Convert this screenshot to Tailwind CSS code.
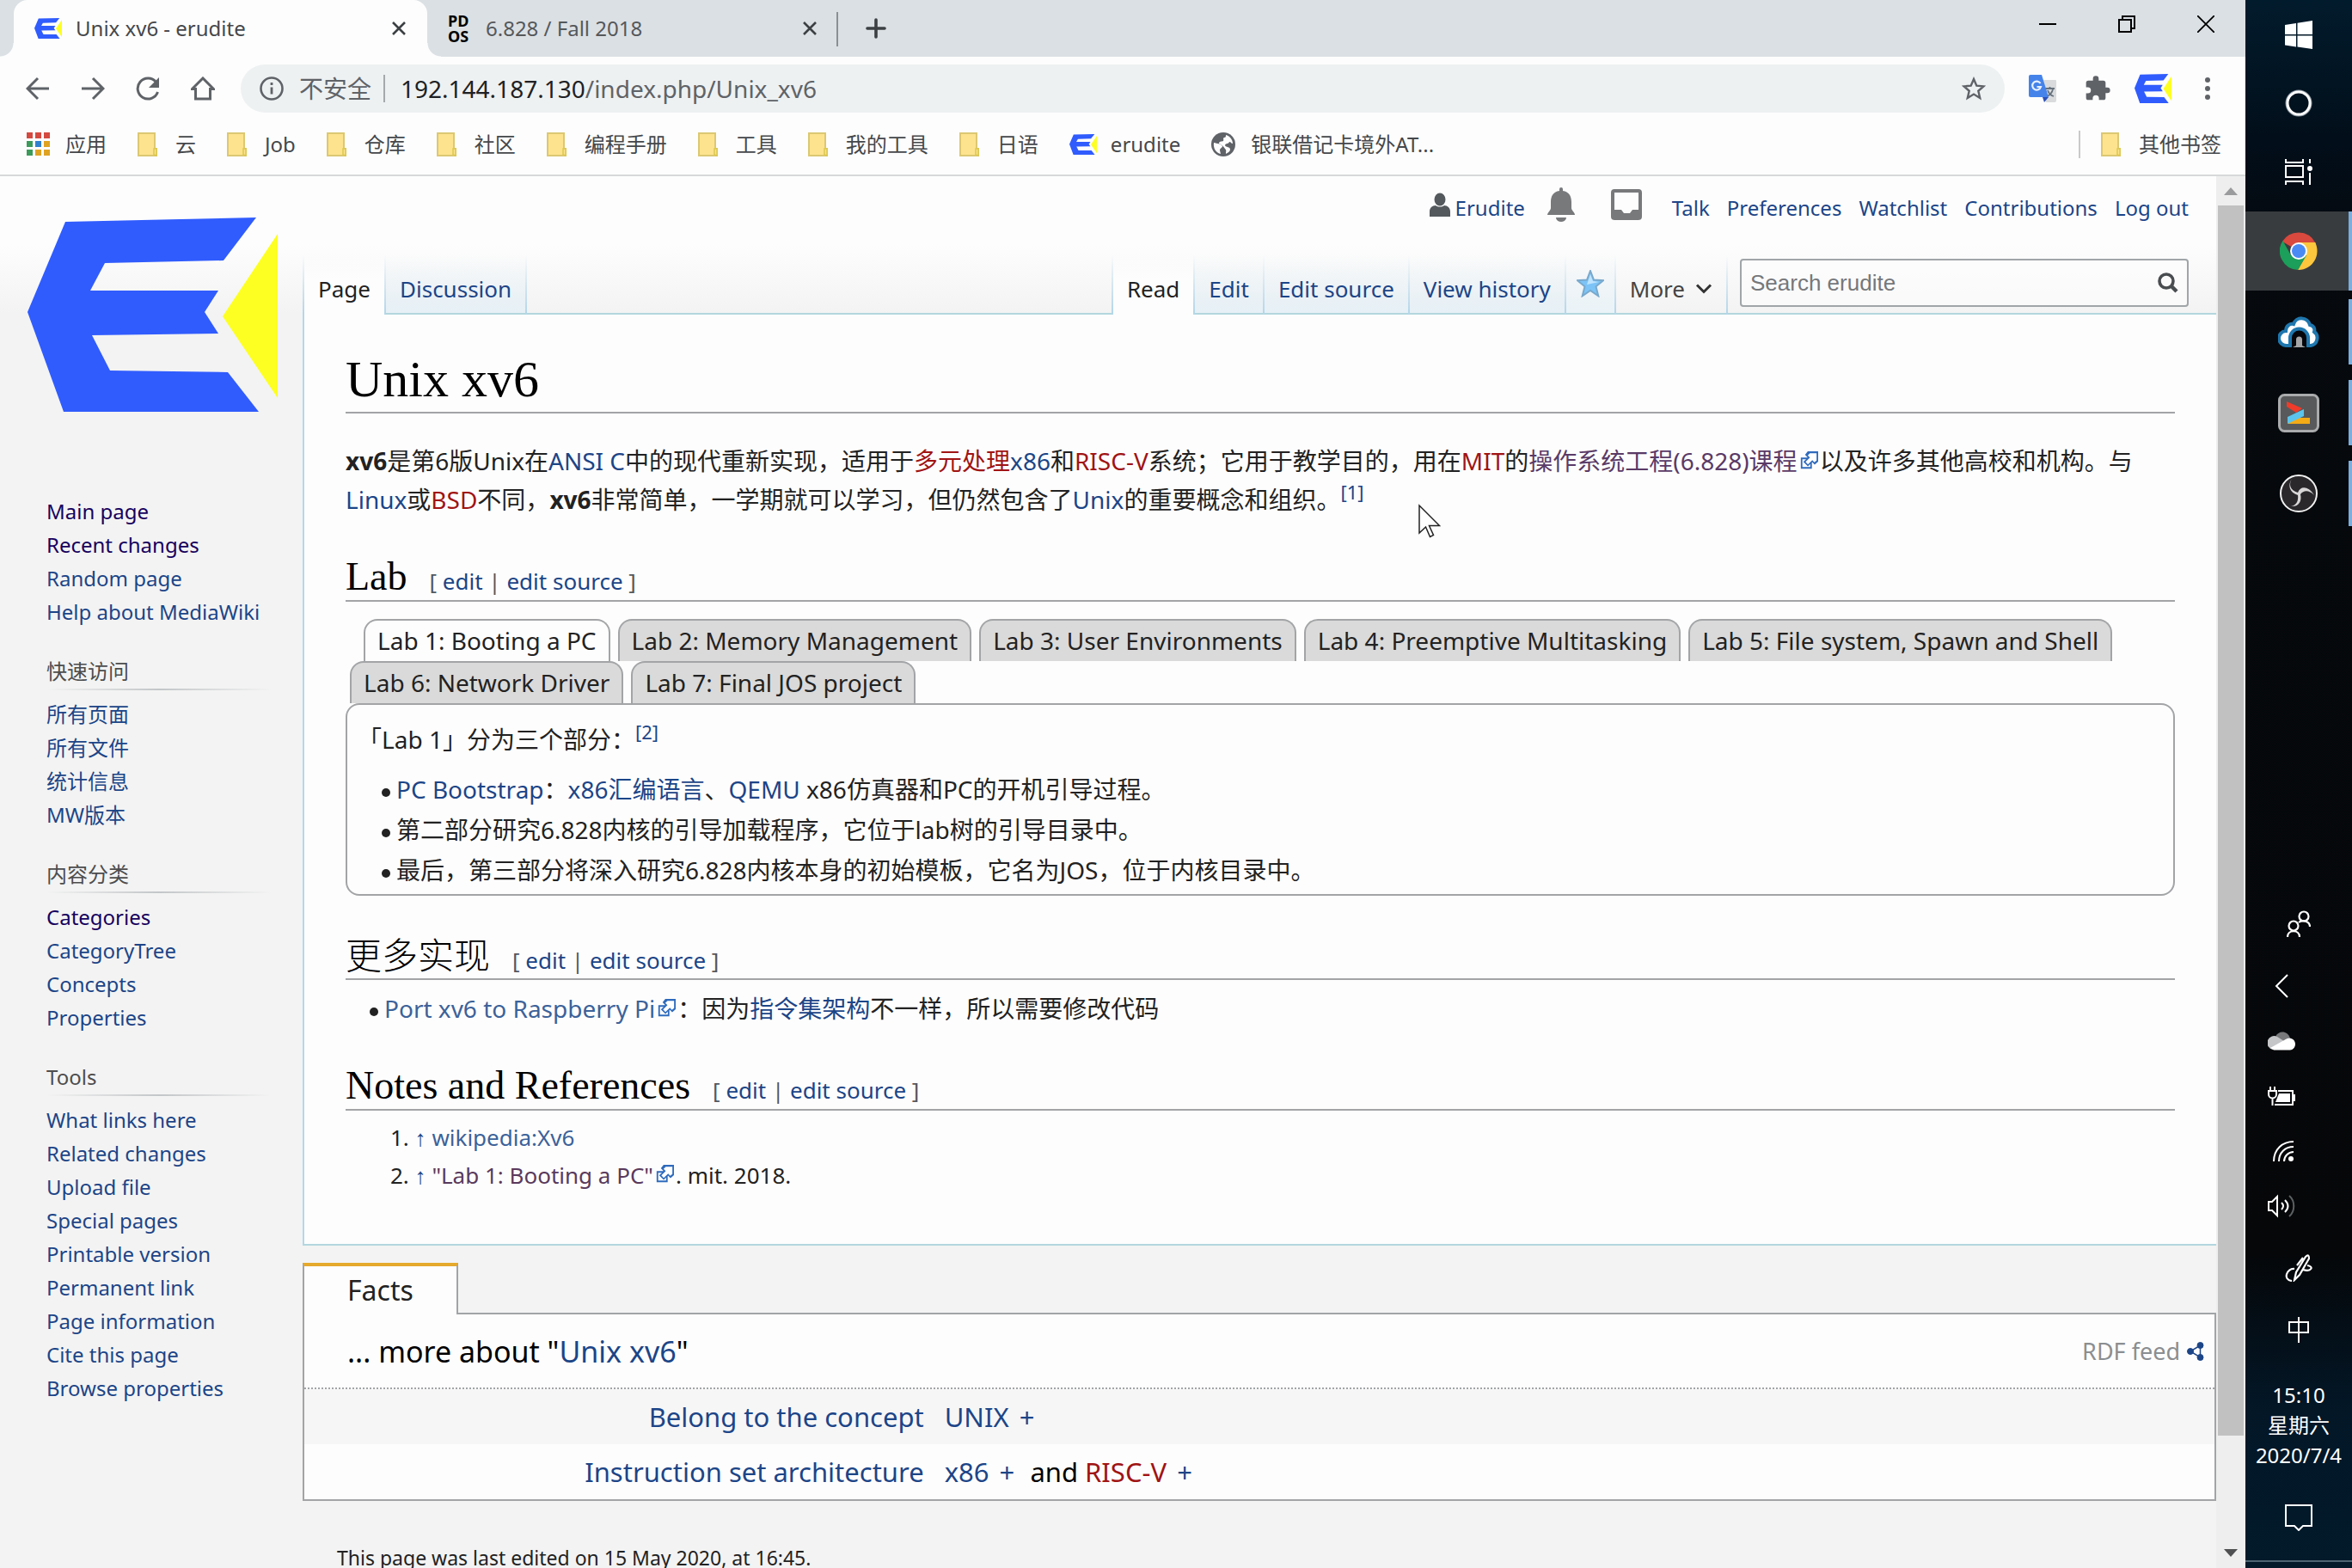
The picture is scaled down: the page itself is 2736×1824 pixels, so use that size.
<!DOCTYPE html>
<html lang="zh-CN">
<head>
  <meta charset="UTF-8" />
  <meta name="viewport" content="width=device-width, initial-scale=1.0" />
  <title>Unix xv6 - erudite</title>
  <script src="https://cdn.jsdelivr.net/npm/@tailwindcss/browser@4"></script>
</head>

<body class="h-screen overflow-hidden flex font-['Noto_Sans','Noto_Sans_CJK_SC',sans-serif] text-[#222]">

  <!-- shared icons -->
  <svg class="hidden">
    <symbol id="logo" viewBox="0 0 291 226" preserveAspectRatio="none">
      <path fill="#305cfd" d="M44 5 266 0 228 50 90 53 73 85 222 85 206 110 222 135 75 137 96 178 233 180 269 226 42 226 0 110Z" />
      <path fill="#fdff22" d="M291 19V210L227 115Z" />
    </symbol>
    <symbol id="folder" viewBox="0 0 24 28">
      <path d="M1 1h19v18h2v8H1z" fill="#fde38d" stroke="#dcc873" stroke-width="2" />
      <path d="M19 26v-7h3v8z" fill="#fde38d" stroke="#dcc84f" stroke-width="1.5" />
    </symbol>
    <symbol id="close" viewBox="0 0 18 18">
      <path d="M2 2l14 14M16 2 2 16" stroke="#3c4043" stroke-width="2.6" />
    </symbol>
    <symbol id="ext" viewBox="0 0 12 12">
      <path fill="#fff" stroke="#2f6bbd" d="M1.5 4.5h6v6h-6z" />
      <path fill="#2f6bbd" d="M5.4 0h6.6v6.6L9.8 8.4 8.2 6.8 5.5 9.6 2.6 6.7l2.8-2.8L3.7 2.2z" />
      <path fill="#fff" d="M6.8 1.2H11v4.6L9.6 7 8.3 5.6 5.5 8.3 4 6.7l2.8-2.8-1.4-1.3z" />
    </symbol>
  </svg>

  <!-- browser window -->
  <div class="flex-1 min-w-0 flex flex-col bg-[#fdfdfd]">

    <header>
      <div class="h-[66px] bg-[#dbe0e4] flex items-start pl-4">
        <div class="relative w-[481px] h-full bg-[#fdfdfd] rounded-t-2xl flex items-center pl-6 pr-6">
          <span class="absolute -left-4 bottom-0 size-4 bg-[radial-gradient(circle_at_0_0,#dbe0e4_15px,#fdfdfd_16px)]"></span>
          <span class="absolute -right-4 bottom-0 size-4 bg-[radial-gradient(circle_at_100%_0,#dbe0e4_15px,#fdfdfd_16px)]"></span>
          <svg class="w-8 h-6"><use href="#logo" /></svg>
          <span class="ml-4 flex-1 text-2xl text-[#45484b]">Unix xv6 - erudite</span>
          <button aria-label="Close tab"><svg class="size-[18px]"><use href="#close" /></svg></button>
        </div>
        <div class="w-[476px] h-full flex items-center pl-6 pr-[22px]">
          <span class="w-7 text-lg leading-[18px] font-bold text-black">PD<br>OS</span>
          <span class="ml-4 flex-1 text-2xl text-[#55585b]">6.828 / Fall 2018</span>
          <button aria-label="Close tab"><svg class="size-[18px]"><use href="#close" /></svg></button>
        </div>
        <div class="w-0.5 h-10 mt-[14px] bg-[#8b8f93]"></div>
        <button class="ml-8 h-full" aria-label="New tab">
          <svg class="size-6" viewBox="0 0 24 24" stroke="#3c4043" stroke-width="3.6" stroke-linecap="round"><path d="M12 2v20M2 12h20" /></svg>
        </button>
        <div class="ml-auto flex">
          <button class="w-[92px] h-14 grid place-items-center" aria-label="Minimize">
            <svg class="size-5" viewBox="0 0 20 20"><path d="M0 10h20" stroke="#000" stroke-width="2" /></svg>
          </button>
          <button class="w-[92px] h-14 grid place-items-center" aria-label="Restore">
            <svg class="size-5" viewBox="0 0 20 20" fill="none" stroke="#000" stroke-width="2"><path d="M1 5h14v14H1zM5 5V1h14v14h-4" /></svg>
          </button>
          <button class="w-[92px] h-14 grid place-items-center" aria-label="Close">
            <svg class="size-5" viewBox="0 0 20 20"><path d="M0 0l20 20M20 0 0 20" stroke="#000" stroke-width="1.8" /></svg>
          </button>
        </div>
      </div>

      <div class="h-[74px] px-3 flex items-center text-[#5f6368]">
        <button class="w-16 grid place-items-center" aria-label="Back">
          <svg class="size-7" viewBox="0 0 28 28" fill="none" stroke="currentColor" stroke-width="3"><path d="M27 14H3M14 2 2 14l12 12" /></svg>
        </button>
        <button class="w-16 grid place-items-center" aria-label="Forward">
          <svg class="size-7" viewBox="0 0 28 28" fill="none" stroke="currentColor" stroke-width="3"><path d="M1 14h24M14 2l12 12-12 12" /></svg>
        </button>
        <button class="w-16 grid place-items-center" aria-label="Reload">
          <svg class="size-7" viewBox="0 0 28 28"><path d="M23.500 6.500A12 12 0 1 0 25.500 18" fill="none" stroke="currentColor" stroke-width="3" /><path d="M27 1v12H15z" fill="currentColor" /></svg>
        </button>
        <button class="w-16 grid place-items-center" aria-label="Home">
          <svg class="size-7" viewBox="0 0 28 28" fill="none" stroke="currentColor" stroke-width="3"><path d="M1.500 14.500 14 2l12.500 12.500H22.500V26h-17V14.500z" /></svg>
        </button>
        <div class="flex-1 mx-3 h-14 rounded-full bg-[#eef1f2] flex items-center pl-[22px] pr-[22px] text-[28px]">
          <svg class="size-7" viewBox="0 0 28 28" fill="none" stroke="currentColor"><circle cx="14" cy="14" r="12.500" stroke-width="2.600" /><path d="M14 12.500v8M14 7v3" stroke-width="2.800" /></svg>
          <span class="ml-[18px]">不安全</span>
          <span class="mx-[14px] w-0.5 h-8 bg-[#a6a9ac]"></span>
          <div class="flex-1 ml-1"><span class="text-[#202124]">192.144.187.130</span><span>/index.php/Unix_xv6</span></div>
          <button aria-label="Bookmark this page">
            <svg class="block size-7" viewBox="0 0 28 28" fill="none" stroke="currentColor" stroke-width="2.400"><path d="M14 3l3.300 7.700 8.200.7-6.200 5.400 1.900 8.200-7.200-4.400L6.800 25l1.900-8.200-6.200-5.400 8.200-.7z" /></svg>
          </button>
        </div>
        <button class="w-16 grid place-items-center" aria-label="Translate">
          <svg class="size-8" viewBox="0 0 32 32"><path d="M12 6h19a1 1 0 0 1 1 1v23a2 2 0 0 1-2 2H20z" fill="#d9dbdd" /><path d="M19 16h11M24.500 14v3M28 17c-1 4-4 7-7 8M22 18c1 3 4 6 7 7" stroke="#66717c" stroke-width="1.800" fill="none" /><path d="M16 26h7l-5 6z" fill="#2b50b8" /><path d="M2 0h13l8 26H2a2 2 0 0 1-2-2V2a2 2 0 0 1 2-2z" fill="#4583ea" /><path d="M13.500 10A5 5 0 1 0 14 14H9.500" fill="none" stroke="#e9f0ff" stroke-width="2.200" /></svg>
        </button>
        <button class="w-16 grid place-items-center" aria-label="Extensions">
          <svg class="size-8" viewBox="0 0 24 24" fill="currentColor"><path d="M20.500 11H19V7a2 2 0 0 0-2-2h-4V3.500a2.500 2.500 0 0 0-5 0V5H4a2 2 0 0 0-2 2v3.800h1.500a2.700 2.700 0 0 1 0 5.400H2V20a2 2 0 0 0 2 2h3.800v-1.500a2.700 2.700 0 0 1 5.400 0V22H17a2 2 0 0 0 2-2v-4h1.500a2.500 2.500 0 0 0 0-5z" /></svg>
        </button>
        <button class="w-16 grid place-items-center" aria-label="Erudite"><svg class="w-[43px] h-[34px]"><use href="#logo" /></svg></button>
        <button class="w-16 grid place-items-center" aria-label="Menu">
          <svg class="w-2 h-7" viewBox="0 0 8 28" fill="currentColor"><circle cx="4" cy="4" r="3" /><circle cx="4" cy="14" r="3" /><circle cx="4" cy="24" r="3" /></svg>
        </button>
      </div>

      <nav class="h-[65px] pb-2 pl-[31px] pr-7 border-b-2 border-[#d7d8d9] flex items-center gap-9 text-2xl text-[#45484b]">
        <a href="#" class="flex items-center gap-[18px]">
          <svg class="size-[27px]" viewBox="0 0 27 27"><path fill="#d44a40" d="M0 0h7v7H0zM10 0h7v7h-7zM20 0h7v7h-7z" /><path fill="#3c9a5b" d="M0 10h7v7H0zM0 20h7v7H0z" /><path fill="#2f80cf" d="M10 10h7v7h-7z" /><path fill="#dfa322" d="M20 10h7v7h-7zM10 20h7v7h-7zM20 20h7v7h-7z" /></svg>应用
        </a>
        <a href="#" class="flex items-center gap-5"><svg class="w-6 h-7"><use href="#folder" /></svg>云</a>
        <a href="#" class="flex items-center gap-5"><svg class="w-6 h-7"><use href="#folder" /></svg>Job</a>
        <a href="#" class="flex items-center gap-5"><svg class="w-6 h-7"><use href="#folder" /></svg>仓库</a>
        <a href="#" class="flex items-center gap-5"><svg class="w-6 h-7"><use href="#folder" /></svg>社区</a>
        <a href="#" class="flex items-center gap-5"><svg class="w-6 h-7"><use href="#folder" /></svg>编程手册</a>
        <a href="#" class="flex items-center gap-5"><svg class="w-6 h-7"><use href="#folder" /></svg>工具</a>
        <a href="#" class="flex items-center gap-5"><svg class="w-6 h-7"><use href="#folder" /></svg>我的工具</a>
        <a href="#" class="flex items-center gap-5"><svg class="w-6 h-7"><use href="#folder" /></svg>日语</a>
        <a href="#" class="flex items-center gap-4"><svg class="w-8 h-6"><use href="#logo" /></svg>erudite</a>
        <a href="#" class="flex items-center gap-[18px]">
          <svg class="size-7" viewBox="0 0 28 28"><circle cx="14" cy="14" r="14" fill="#5f6368" /><path fill="#fdfdfd" d="M3 12c4 1 8 1 10 4 0 2-3 2-3 5l1 4C6 24 2 19 3 12zM17 3c4 1 8 5 8 10-2 0-2-2-4-2-1 3-4 1-5 4 1 3 6 1 6 5 0 2-3 4-5 5 0-3 1-4-1-6-2-3-4-5-7-6 0-3 3-2 5-3 1-2-1-3 1-4 2 0 2-1 2-3z" /></svg>银联借记卡境外AT...
        </a>
        <a href="#" class="ml-auto flex items-center gap-5 border-l-2 border-[#c8cacc] pl-6"><svg class="w-6 h-7"><use href="#folder" /></svg>其他书签</a>
      </nav>
    </header>

    <!-- wiki page -->
    <div class="relative flex-1 min-h-0 flex bg-[#f3f3f3] bg-[linear-gradient(#fdfdfd_50%,#f3f3f3)] bg-[length:100%_160px] bg-no-repeat">

      <aside class="w-[352px] shrink-0 overflow-hidden pt-12 text-2xl leading-[39px] text-[#1c4587]">
        <a href="#" class="block pl-8" aria-label="Main page"><svg class="block w-[291px] h-[226px]"><use href="#logo" /></svg></a>
        <ul class="mt-24 pl-[54px]">
          <li><a href="#" class="text-[#17025e]">Main page</a></li>
          <li><a href="#" class="text-[#17025e]">Recent changes</a></li>
          <li><a href="#">Random page</a></li>
          <li><a href="#">Help about MediaWiki</a></li>
        </ul>
        <h3 class="mt-[30px] pl-[54px] leading-10 text-[#4d4d4d]">快速访问</h3>
        <div class="ml-[54px] mr-9 h-0.5 bg-linear-to-r from-transparent via-[#c3c6c8] to-transparent"></div>
        <ul class="mt-2 pl-[54px]">
          <li><a href="#">所有页面</a></li>
          <li><a href="#">所有文件</a></li>
          <li><a href="#">统计信息</a></li>
          <li><a href="#">MW版本</a></li>
        </ul>
        <h3 class="mt-[30px] pl-[54px] leading-10 text-[#4d4d4d]">内容分类</h3>
        <div class="ml-[54px] mr-9 h-0.5 bg-linear-to-r from-transparent via-[#c3c6c8] to-transparent"></div>
        <ul class="mt-2 pl-[54px]">
          <li><a href="#" class="text-[#17025e]">Categories</a></li>
          <li><a href="#">CategoryTree</a></li>
          <li><a href="#">Concepts</a></li>
          <li><a href="#">Properties</a></li>
        </ul>
        <h3 class="mt-[30px] pl-[54px] leading-10 text-[#4d4d4d]">Tools</h3>
        <div class="ml-[54px] mr-9 h-0.5 bg-linear-to-r from-transparent via-[#c3c6c8] to-transparent"></div>
        <ul class="mt-2 pl-[54px]">
          <li><a href="#">What links here</a></li>
          <li><a href="#">Related changes</a></li>
          <li><a href="#">Upload file</a></li>
          <li><a href="#">Special pages</a></li>
          <li><a href="#">Printable version</a></li>
          <li><a href="#">Permanent link</a></li>
          <li><a href="#">Page information</a></li>
          <li><a href="#">Cite this page</a></li>
          <li><a href="#">Browse properties</a></li>
        </ul>
      </aside>

      <div class="flex-1 min-w-0 overflow-hidden">
        <nav class="h-[74px] pr-8 flex items-center justify-end gap-5 text-2xl text-[#1c4587]">
          <a href="#" class="flex items-center gap-1.5">
            <svg class="w-6 h-7 mb-2" viewBox="0 0 24 28" fill="#54595d"><ellipse cx="12" cy="8" rx="6.500" ry="7.500" /><path d="M0 28v-6c0-4 3-7 7-7 3 2 7 2 10 0 4 0 7 3 7 7v6z" /></svg>Erudite
          </a>
          <a href="#" class="ml-1.5 mb-2" aria-label="Alerts">
            <svg class="w-8 h-10" viewBox="0 0 32 40" fill="#77797b"><path d="M14 2a2 2 0 0 1 4 0v2c7 1 10 6 10 13v7c0 3 4 5 4 8H0c0-3 4-5 4-8v-7C4 10 7 5 14 4zM10 35h12c0 3-3 5-6 5s-6-2-6-5z" /></svg>
          </a>
          <a href="#" class="ml-[22px] mb-2 mr-[15px]" aria-label="Notices">
            <svg class="size-9" viewBox="0 0 36 36"><path fill="#77797b" fill-rule="evenodd" d="M4 0h28a4 4 0 0 1 4 4v28a4 4 0 0 1-4 4H4a4 4 0 0 1-4-4V4a4 4 0 0 1 4-4zm0 4v20h8l3 4h7l3-4h7V4z" /></svg>
          </a>
          <a href="#">Talk</a>
          <a href="#">Preferences</a>
          <a href="#">Watchlist</a>
          <a href="#">Contributions</a>
          <a href="#">Log out</a>
        </nav>

        <div class="mt-[17px] h-[70px] flex text-[26px] text-[#1c4587]">
          <div class="w-0.5 bg-linear-to-b from-transparent to-[#b3d6ea]"></div>
          <a href="#" class="px-4 pt-3 pb-0.5 flex items-center text-[#222] bg-linear-to-b from-transparent to-[#fdfdfd] to-40%">Page</a>
          <div class="w-0.5 bg-linear-to-b from-transparent to-[#b3d6ea]"></div>
          <a href="#" class="px-4 pt-3 flex items-center border-b-2 border-[#b3d6de] bg-linear-to-b from-transparent to-[#e6f0f6]">Discussion</a>
          <div class="w-0.5 bg-linear-to-b from-transparent to-[#b3d6ea]"></div>
          <div class="flex-1 border-b-2 border-[#b3d6de]"></div>
          <div class="w-0.5 bg-linear-to-b from-transparent to-[#b3d6ea]"></div>
          <a href="#" class="px-4 pt-3 pb-0.5 flex items-center text-[#222] bg-linear-to-b from-transparent to-[#fdfdfd] to-40%">Read</a>
          <div class="w-0.5 bg-linear-to-b from-transparent to-[#b3d6ea]"></div>
          <a href="#" class="px-4 pt-3 flex items-center border-b-2 border-[#b3d6de] bg-linear-to-b from-transparent to-[#e6f0f6]">Edit</a>
          <div class="w-0.5 bg-linear-to-b from-transparent to-[#b3d6ea]"></div>
          <a href="#" class="px-4 pt-3 flex items-center border-b-2 border-[#b3d6de] bg-linear-to-b from-transparent to-[#e6f0f6]">Edit source</a>
          <div class="w-0.5 bg-linear-to-b from-transparent to-[#b3d6ea]"></div>
          <a href="#" class="px-4 pt-3 flex items-center border-b-2 border-[#b3d6de] bg-linear-to-b from-transparent to-[#e6f0f6]">View history</a>
          <div class="w-0.5 bg-linear-to-b from-transparent to-[#b3d6ea]"></div>
          <a href="#" class="px-3 flex items-center border-b-2 border-[#b3d6de] bg-linear-to-b from-transparent to-[#eaf3f8]" aria-label="Unwatch">
            <svg class="size-8" viewBox="0 0 32 32"><path d="M16 1l4 10.500 11 .8-8.500 7 2.800 11L16 24l-9.300 6.300 2.800-11L1 12.300l11-.8z" fill="#7cc4f7" stroke="#79a9cc" stroke-width="2" /><path d="M16 5l3 8 7 1-14 3z" fill="#bfe4ff" /></svg>
          </a>
          <div class="w-0.5 bg-linear-to-b from-transparent to-[#b3d6ea]"></div>
          <button class="px-4 pt-3 flex items-center gap-3 border-b-2 border-[#b3d6de] text-[#444]">More
            <svg class="w-5 h-3" viewBox="0 0 20 12"><path d="M2 1.500l8 8 8-8" fill="none" stroke="#333" stroke-width="3" /></svg>
          </button>
          <div class="w-0.5 bg-linear-to-b from-transparent to-[#b3d6ea]"></div>
          <form class="pl-[14px] pr-8 pt-[5px] border-b-2 border-[#b3d6de]">
            <div class="w-[522px] h-14 flex items-center border-2 border-[#a0a5a8] rounded-sm px-2.5 bg-[#fdfdfd]/60">
              <input type="search" aria-label="Search erudite" placeholder="Search erudite" class="flex-1 min-w-0 outline-none font-['Liberation_Sans',sans-serif] placeholder:text-[#75787b]" />
              <button type="button" aria-label="Search">
                <svg class="block size-6" viewBox="0 0 24 24" fill="none" stroke="#4a4d50"><circle cx="10" cy="10" r="8" stroke-width="3.600" /><path d="M15.500 15.500 22 22" stroke-width="4.500" /></svg>
              </button>
            </div>
          </form>
        </div>

        <main class="border-l-2 border-b-2 border-l-[#b3d6ea] border-b-[#b3d6de] bg-[#fdfdfd] px-12 pt-[43px] pb-[57px] text-[28px] leading-[45px]">
          <h1 class="pb-[6px] border-b-2 border-[#a2a4a6] font-['Liberation_Serif',serif] text-[60px] leading-[64px] text-black">Unix xv6</h1>

          <p class="mt-[33px]"><b>xv6</b>是第6版Unix在<a href="#" class="text-[#1c4587]">ANSI C</a>中的现代重新实现，适用于<a href="#" class="text-[#a01414]">多元处理</a><a href="#" class="text-[#1c4587]">x86</a>和<a href="#" class="text-[#a01414]">RISC-V</a>系统；它用于教学目的，用在<a href="#" class="text-[#a01414]">MIT</a>的<a href="#" class="text-[#5a3a66]">操作系统工程(6.828)课程<svg class="inline size-[22px] mx-0.5 align-baseline"><use href="#ext" /></svg></a>以及许多其他高校和机构。与<a href="#" class="text-[#1c4587]">Linux</a>或<a href="#" class="text-[#a01414]">BSD</a>不同，<b>xv6</b>非常简单，一学期就可以学习，但仍然包含了<a href="#" class="text-[#1c4587]">Unix</a>的重要概念和组织。<a href="#" class="text-[#1c4587]"><sup class="text-[22px]">[1]</sup></a></p>

          <h2 class="mt-[39px] border-b-2 border-[#a2a4a6] leading-[55px] font-['Liberation_Serif',serif] text-[46px] text-black">Lab<span class="ml-[26px] leading-none font-['Noto_Sans',sans-serif] text-[26px] text-[#54595d]">[ <a href="#" class="text-[#1c4587]">edit</a> | <a href="#" class="text-[#1c4587]">edit source</a> ]</span></h2>

          <div class="mt-5 pl-[5px] flex flex-wrap gap-x-[9px] text-[28px]">
            <button class="ml-4 h-[49px] px-3.5 border-2 border-b-0 border-[#a2a4a6] rounded-t-2xl">Lab 1: Booting a PC</button>
            <button class="h-[49px] px-3.5 border-2 border-b-0 border-[#a2a4a6] rounded-t-2xl bg-[#dadada]">Lab 2: Memory Management</button>
            <button class="h-[49px] px-3.5 border-2 border-b-0 border-[#a2a4a6] rounded-t-2xl bg-[#dadada]">Lab 3: User Environments</button>
            <button class="h-[49px] px-3.5 border-2 border-b-0 border-[#a2a4a6] rounded-t-2xl bg-[#dadada]">Lab 4: Preemptive Multitasking</button>
            <button class="h-[49px] px-3.5 border-2 border-b-0 border-[#a2a4a6] rounded-t-2xl bg-[#dadada]">Lab 5: File system, Spawn and Shell</button>
            <button class="h-[49px] px-3.5 border-2 border-b-0 border-[#a2a4a6] rounded-t-2xl bg-[#dadada]">Lab 6: Network Driver</button>
            <button class="h-[49px] px-3.5 border-2 border-b-0 border-[#a2a4a6] rounded-t-2xl bg-[#dadada]">Lab 7: Final JOS project</button>
          </div>
          <section class="border-2 border-[#a2a4a6] rounded-2xl pt-[18px] pb-1 pl-3">
            <p>「Lab 1」分为三个部分：<a href="#" class="text-[#1c4587]"><sup class="text-[22px]">[2]</sup></a></p>
            <ul class="mt-3 pl-7 leading-[47px]">
              <li class="before:content-[''] before:inline-block before:size-2.5 before:rounded-full before:bg-[#222] before:mr-[7px] before:align-middle"><a href="#" class="text-[#1c4587]">PC Bootstrap</a>：<a href="#" class="text-[#1c4587]">x86汇编语言</a>、<a href="#" class="text-[#1c4587]">QEMU</a> x86仿真器和PC的开机引导过程。</li>
              <li class="before:content-[''] before:inline-block before:size-2.5 before:rounded-full before:bg-[#222] before:mr-[7px] before:align-middle">第二部分研究6.828内核的引导加载程序，它位于lab树的引导目录中。</li>
              <li class="before:content-[''] before:inline-block before:size-2.5 before:rounded-full before:bg-[#222] before:mr-[7px] before:align-middle">最后，第三部分将深入研究6.828内核本身的初始模板，它名为JOS，位于内核目录中。</li>
            </ul>
          </section>

          <h2 class="mt-[41px] border-b-2 border-[#a2a4a6] leading-[55px] font-light text-[42px] text-black">更多实现<span class="ml-[26px] leading-none font-normal text-[26px] text-[#54595d]">[ <a href="#" class="text-[#1c4587]">edit</a> | <a href="#" class="text-[#1c4587]">edit source</a> ]</span></h2>
          <ul class="mt-[11px] pl-7">
            <li class="before:content-[''] before:inline-block before:size-2.5 before:rounded-full before:bg-[#222] before:mr-[7px] before:align-middle"><a href="#" class="text-[#3c6299]">Port xv6 to Raspberry Pi<svg class="inline size-[22px] mx-0.5 align-baseline"><use href="#ext" /></svg></a>：因为<a href="#" class="text-[#1c4587]">指令集架构</a>不一样，所以需要修改代码</li>
          </ul>

          <h2 class="mt-[39px] border-b-2 border-[#a2a4a6] leading-[55px] font-['Liberation_Serif',serif] text-[46px] text-black">Notes and References<span class="ml-[26px] leading-none font-['Noto_Sans',sans-serif] text-[26px] text-[#54595d]">[ <a href="#" class="text-[#1c4587]">edit</a> | <a href="#" class="text-[#1c4587]">edit source</a> ]</span></h2>
          <ol class="mt-2.5 pl-[52px] text-[26px] leading-[43px]">
            <li>1. <a href="#" class="font-['Liberation_Sans',sans-serif] text-[#1c4587]">↑</a> <a href="#" class="text-[#3c6299]">wikipedia:Xv6</a></li>
            <li>2. <a href="#" class="font-['Liberation_Sans',sans-serif] text-[#1c4587]">↑</a> <a href="#" class="text-[#5a3a5c]">"Lab 1: Booting a PC"<svg class="inline size-[22px] mx-0.5 align-baseline"><use href="#ext" /></svg></a>. mit. 2018.</li>
          </ol>
        </main>

        <section class="mt-5 text-[32px] leading-[44px]">
          <h2 class="relative w-[181px] h-[60px] pl-[50px] pt-1.5 border-x-2 border-t-4 border-x-[#a2a4a6] border-t-[#e5a92c] bg-[#fdfdfd]">Facts</h2>
          <div class="-mt-0.5 border-2 border-[#a2a4a6] bg-[#fdfdfd]">
            <div class="h-[87px] border-b-2 border-dotted border-[#a2a4a6] flex items-center justify-between pl-[50px] pr-3 text-[34px] text-black">
              <span>... more about "<a href="#" class="text-[#1c4587]">Unix xv6</a>"</span>
              <a href="#" class="flex items-center gap-2 text-[27px] text-[#8b8e91]">RDF feed
                <svg class="w-5 h-[22px]" viewBox="0 0 20 22" fill="#1c4587" stroke="#1c4587"><path d="M15.500 4 4 11l11.500 7z" fill="none" stroke-width="1.500" /><circle cx="15.500" cy="4" r="3.500" /><circle cx="4" cy="11" r="3.500" /><circle cx="15.500" cy="18" r="3.500" /></svg>
              </a>
            </div>
            <table class="w-full text-[31px] text-[#1c4587]">
              <tr class="h-16 bg-[#f6f6f7]">
                <th class="w-1/3 pr-5 text-right font-normal"><a href="#">Belong to the concept</a></th>
                <td class="pl-1"><a href="#">UNIX</a> <a href="#" class="ml-1">+</a></td>
              </tr>
              <tr class="h-16">
                <th class="pr-5 text-right font-normal"><a href="#">Instruction set architecture</a></th>
                <td class="pl-1"><a href="#">x86</a> <a href="#" class="ml-1">+</a> <span class="ml-2.5 text-black">and</span> <a href="#" class="text-[#a01414]">RISC-V</a> <a href="#" class="ml-1">+</a></td>
              </tr>
            </table>
          </div>
        </section>

        <footer class="mt-[52px] pl-10 text-[23px] leading-7">This page was last edited on 15 May 2020, at 16:45.</footer>
      </div>

      <!-- scrollbar -->
      <div class="w-[34px] shrink-0 bg-[#eee] flex flex-col items-center">
        <svg class="w-4 h-[34px] shrink-0" viewBox="0 0 16 34"><path d="M0 22h16L8 13z" fill="#9a9b9c" /></svg>
        <div class="w-[30px] h-[1431px] bg-[#c1c1c1]"></div>
        <svg class="w-4 h-[34px] mt-auto" viewBox="0 0 16 34"><path d="M0 12h16L8 21z" fill="#4f5051" /></svg>
      </div>

      <!-- mouse pointer -->
      <svg class="absolute left-[1650px] top-[381px] w-[26px] h-10" viewBox="0 0 26 40"><path d="M1 2v32l7.500-7 5 11.500 4-2-5-11h12z" fill="#fff" stroke="#222" stroke-width="1.500" /></svg>
    </div>
  </div>

  <!-- taskbar -->
  <nav class="w-31 shrink-0 flex flex-col text-white bg-[linear-gradient(#021b2c,#020d18_10%,#06090d_16%,#050709_80%,#031727_90%,#021a2a)]">
    <button class="h-20 grid place-items-center" aria-label="Start">
      <svg class="w-8 h-[33px]" viewBox="0 0 32 33" fill="#fff"><path d="M0 5l13-2v13H0zM14.500 2.800 32 0v16H14.500zM0 17.500h13v13L0 28.500zM14.500 17.500H32V33l-17.500-2.500z" /></svg>
    </button>
    <button class="h-20 grid place-items-center" aria-label="Cortana">
      <svg class="size-8" viewBox="0 0 32 32" fill="none"><circle cx="16" cy="16" r="14" stroke="#8d99a3" stroke-width="3" /><circle cx="16" cy="16" r="13" stroke="#fff" stroke-width="3" /></svg>
    </button>
    <button class="h-20 grid place-items-center" aria-label="Task view">
      <svg class="size-8" viewBox="0 0 32 32" fill="none" stroke="#fff" stroke-width="2"><path d="M1 9h20v13H1zM1 1v4h20V1M1 31v-4h20v4M29 1v5M29 17v14" /><circle cx="29" cy="12" r="2" fill="#fff" /></svg>
    </button>
    <button class="mt-1.5 h-[92px] grid place-items-center bg-[#393c3f] border-r-4 border-[#7aaede] pl-1" aria-label="Google Chrome">
      <svg class="size-11" viewBox="0 0 44 44"><path d="M22 22 2.900 11A22 22 0 0 1 41.100 12H22z" fill="#d9493d" /><path d="M22 22 41.100 12A22 22 0 0 1 22 44l-1 0 9.500-17z" fill="#fcc63d" /><path d="M22 22 13 27 3.500 10A22 22 0 0 0 21 44l10-17z" fill="#1b9f5a" /><path d="M22 12h19.200c1.500 4 .9 6 .8 10L31 27z" fill="#fcc63d" /><circle cx="22" cy="22" r="10" fill="#fff" /><circle cx="22" cy="22" r="8" fill="#4a8af4" /></svg>
    </button>
    <button class="mt-2.5 h-[76px] grid place-items-center border-r-4 border-[#7aaede] pl-1" aria-label="Cloud tunnel">
      <svg class="w-12 h-9" viewBox="0 0 48 36"><path d="M10 34a8 8 0 0 1-1-17c0-6 5-9 9-8C21 0 34 0 37 10c5 1 6 5 5 8 6 4 4 15-4 16z" fill="#fff" stroke="#1f77ae" stroke-width="4" /><path d="M14 36V25a10 10 0 0 1 21 0v11z" fill="#05070a" stroke="#1f77ae" stroke-width="4" /><path d="M16 34h17v3H16z" fill="#05070a" /><path d="M21 34v-7a3.500 3.500 0 0 1 7 0v7l4 2H17z" fill="#a5a6a8" /></svg>
    </button>
    <button class="mt-[18px] h-[76px] grid place-items-center border-r-4 border-[#7aaede] pl-1" aria-label="Terminal">
      <svg class="w-12 h-[45px]" viewBox="0 0 48 45"><rect x="1.500" y="1.500" width="45" height="42" rx="6" fill="#58595a" stroke="#a9abac" stroke-width="3" /><path fill="#ef3b2a" d="M10 9l18 8-7 5L10 15z" /><path fill="#f4ab16" d="M37 28v7H11z M20 28h17v7H11z" /><path fill="#5ac4ec" d="M11 27l19-9v8l-19 9z" /></svg>
    </button>
    <button class="mt-[18px] h-[76px] grid place-items-center border-r-4 border-[#7aaede] pl-1" aria-label="OBS Studio">
      <svg class="size-11" viewBox="0 0 44 44"><circle cx="22" cy="22" r="21" fill="#2a282b" stroke="#f2f2f2" stroke-width="2" /><path d="M14 5c-4 7-2 13 7 16 3-8 12-8 19 3-6-6-12-6-16-1 2 8-2 15-11 14 6-1 9-6 8-13C11 21 9 12 14 5z" fill="#d8d6d6" /></svg>
    </button>

    <button class="mt-auto h-20 grid place-items-center" aria-label="People">
      <svg class="w-7 h-8" viewBox="0 0 28 32" fill="none" stroke="#fff" stroke-width="2.200"><circle cx="20" cy="7" r="5.500" /><circle cx="8" cy="18" r="5.500" /><path d="M1 31c0-9 14-9 14 0M14 14c5-4 13-1 13 5" /></svg>
    </button>
    <button class="h-16 pr-10 grid place-items-center" aria-label="Show hidden icons">
      <svg class="w-4 h-7" viewBox="0 0 16 28" fill="none" stroke="#fff" stroke-width="2"><path d="M15 1 2 14l13 13" /></svg>
    </button>
    <button class="h-16 pr-10 grid place-items-center" aria-label="OneDrive">
      <svg class="w-8 h-[22px]" viewBox="0 0 32 22"><path d="M9 6c3-7 14-8 17 2l-6 5z" fill="#77797b" /><path d="M6 21a8 8 0 1 1 5-15l11 7L6 21z" fill="#c4c6c8" /><path d="M3 19 20 9.500c5-4 12-1 12 5 0 4-3 7-6 7H7z" fill="#fff" /></svg>
    </button>
    <button class="h-16 pr-10 grid place-items-center" aria-label="Battery">
      <svg class="w-8 h-6" viewBox="0 0 32 24" fill="none" stroke="#fff" stroke-width="2"><path d="M1 6h9v4c0 6-9 6-9 0zM3 6V1M8 6V1M5.500 15v8M12 6h17v16H8M31 10v8" /><path d="M13 9h13v10H9z" fill="#fff" stroke="none" /></svg>
    </button>
    <button class="h-16 pr-9 grid place-items-center" aria-label="Network">
      <svg class="size-6" viewBox="0 0 24 24" fill="none" stroke="#fff" stroke-width="2"><path d="M1 24C1 10 11 1 24 1M7 24C7 14 14 7 24 7M13 24c0-6 5-11 11-11" /><circle cx="21" cy="21" r="3" fill="#fff" stroke="none" /></svg>
    </button>
    <button class="h-16 pr-10 grid place-items-center" aria-label="Volume">
      <svg class="w-8 h-7" viewBox="0 0 32 28" fill="none" stroke="#fff" stroke-width="2"><path d="M1 9h4l6-6v22l-6-6H1zM16 10q4 4 0 8M20 7q7 7 0 14" /><path d="M25 2c7 6 7 18 0 24" stroke="#5d6062" /></svg>
    </button>
    <button class="h-20 grid place-items-center" aria-label="Windows Ink">
      <svg class="w-8 h-8" viewBox="0 0 32 32" fill="none" stroke="#fff" stroke-width="2.200"><path d="M11 30l2-9L24 3q4-4 4 2L17 24zM14 13l7-9M11 17c-9-1-14 13-3 14M21 18c10 3 13-4 5-5" /></svg>
    </button>
    <button class="h-16 grid place-items-center" aria-label="中">
      <svg class="w-6 h-[30px]" viewBox="0 0 24 30" fill="none" stroke="#fff" stroke-width="2"><path d="M1 6h22v12H1zM12 0v30" /></svg>
    </button>
    <button class="pt-[26px] pb-[31px] text-2xl leading-[35px] text-center">15:10<br>星期六<br>2020/7/4</button>
    <button class="h-12 mb-[26px] grid place-items-center" aria-label="Notifications">
      <svg class="w-8 h-[31px]" viewBox="0 0 32 31" fill="none" stroke="#fff" stroke-width="2"><path d="M1 1h30v24H21l-5 5-5-5H1z" /></svg>
    </button>
    <button class="h-[9px] border-t-2 border-[#4d6472]" aria-label="Show desktop"></button>
  </nav>
</body>
</html>
